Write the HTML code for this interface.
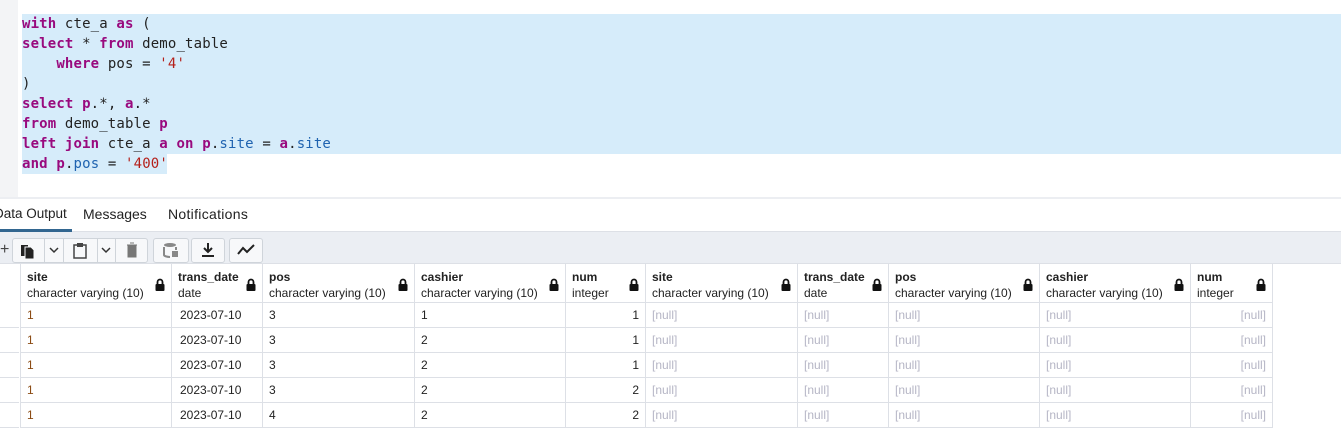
<!DOCTYPE html>
<html><head><style>
body{margin:0;width:1341px;height:440px;overflow:hidden;background:#fff;font-family:"Liberation Sans",Arial,sans-serif;position:relative}
.gut{position:absolute;left:0;top:0;width:18px;height:197px;background:#f3f4f6}
.hl{position:absolute;background:#d6ecfa}
.code{position:absolute;left:22px;top:14px;font:14px/20px "DejaVu Sans Mono",monospace;letter-spacing:0.15px;color:#222;white-space:pre}
.k{color:#990a7e;font-weight:bold}.s{color:#b5201a}.f{color:#1f63b0}
.sep{position:absolute;left:0;top:197px;width:1341px;height:2px;background:#eceef2}
.tabs{position:absolute;top:199px;left:0;width:1341px;height:32px;border-bottom:1px solid #dde0e6;font-size:14px;color:#222}
.tabs span{position:absolute;top:7px}
.ul{position:absolute;left:0;top:229px;width:72px;height:3px;background:#326690}
.tb{position:absolute;top:232px;left:0;width:1341px;height:31px;background:#ebeef3;border-bottom:1px solid #dde0e6}
.btn{position:absolute;top:6px;height:25px;background:#f7f8fa;border:1px solid #cfd4da;border-radius:3px;box-sizing:border-box}
table{position:absolute;left:20px;top:263px;border-collapse:collapse;font-size:12px;table-layout:fixed}
td,th{border:1px solid #dde0e6;padding:0 6px;height:24px;color:#222;font-weight:normal;text-align:left;position:relative;white-space:nowrap;overflow:hidden}
th{height:33px;vertical-align:top;padding-top:5px;line-height:16px}
th b{font-weight:bold;color:#222}
th svg{position:absolute;right:6px;top:14px}
td.o{color:#8a4a12}td.n{color:#b5b5c5}td.r{text-align:right}
.stub{position:absolute;left:0;width:19px;border-bottom:1px solid #dde0e6;background:#fff}
</style></head><body>
<div class="gut"></div>
<div class="hl" style="left:22px;top:14px;width:1319px;height:140px"></div>
<div class="hl" style="left:22px;top:154px;width:145px;height:20px"></div>
<div class="code"><span class="k">with</span> cte_a <span class="k">as</span> (
<span class="k">select</span> * <span class="k">from</span> demo_table
    <span class="k">where</span> pos = <span class="s">'4'</span>
)
<span class="k">select</span> <span class="k">p</span>.*, <span class="k">a</span>.*
<span class="k">from</span> demo_table <span class="k">p</span>
<span class="k">left join</span> cte_a <span class="k">a</span> <span class="k">on</span> <span class="k">p</span>.<span class="f">site</span> = <span class="k">a</span>.<span class="f">site</span>
<span class="k">and</span> <span class="k">p</span>.<span class="f">pos</span> = <span class="s">'400'</span></div>
<div class="sep"></div>
<div class="tabs"><span style="left:-6px;font-size:13.5px">Data Output</span><span style="left:83px">Messages</span><span style="left:168px;letter-spacing:0.3px">Notifications</span></div>
<div class="ul"></div>
<div class="tb">
<div style="position:absolute;left:0;top:9px;font-size:16px;color:#444">+</div>
<div class="btn" style="left:12px;width:136px"></div>
<div style="position:absolute;left:44px;top:6px;width:1px;height:25px;background:#cfd4da"></div>
<div style="position:absolute;left:63px;top:6px;width:1px;height:25px;background:#cfd4da"></div>
<div style="position:absolute;left:97px;top:6px;width:1px;height:25px;background:#cfd4da"></div>
<div style="position:absolute;left:115px;top:6px;width:1px;height:25px;background:#cfd4da"></div>
<svg style="position:absolute;left:20px;top:11px" width="16" height="16"><path d="M1 2h7v11H1z" fill="#222"/><path d="M5 4h6l3 3v9H5z" fill="#222" stroke="#f7f8fa" stroke-width="1"/></svg>
<svg style="position:absolute;left:49px;top:14px" width="10" height="8"><path d="M1 2l4 4 4-4" fill="none" stroke="#333" stroke-width="1.5"/></svg>
<svg style="position:absolute;left:72px;top:10px" width="16" height="17"><path d="M2 3h12v13H2z" fill="none" stroke="#444" stroke-width="1.5"/><path d="M5 1h6v4H5z" fill="#444"/></svg>
<svg style="position:absolute;left:101px;top:14px" width="10" height="8"><path d="M1 2l4 4 4-4" fill="none" stroke="#333" stroke-width="1.5"/></svg>
<svg style="position:absolute;left:126px;top:10px" width="12" height="16"><path d="M1 3h10M4 1h4M2 4h8v11H2z" fill="#777" stroke="#777"/></svg>
<div class="btn" style="left:153px;width:36px"></div>
<svg style="position:absolute;left:163px;top:10px" width="16" height="16"><ellipse cx="7" cy="3" rx="6" ry="2" fill="#888"/><path d="M1 5v8c0 1 3 2 6 2M13 5v3" stroke="#888" stroke-width="2" fill="none"/><rect x="9" y="9" width="6" height="6" fill="#888"/></svg>
<div class="btn" style="left:191px;width:34px"></div>
<svg style="position:absolute;left:201px;top:10px" width="14" height="16"><path d="M7 1v9M3 6l4 4 4-4M1 14h12" stroke="#222" stroke-width="2" fill="none"/></svg>
<div class="btn" style="left:229px;width:34px"></div>
<svg style="position:absolute;left:237px;top:12px" width="18" height="12"><path d="M1 10l5-6 4 4 7-7" stroke="#222" stroke-width="2" fill="none"/></svg>
</div>
<div class="stub" style="top:303px;height:24px"></div><div class="stub" style="top:328px;height:24px"></div><div class="stub" style="top:353px;height:24px"></div><div class="stub" style="top:378px;height:24px"></div><div class="stub" style="top:403px;height:24px"></div>
<table>
<colgroup><col style="width:151px"><col style="width:91px"><col style="width:152px"><col style="width:151px"><col style="width:80px"><col style="width:152px"><col style="width:91px"><col style="width:151px"><col style="width:151px"><col style="width:82px"></colgroup>
<tr>
<th><b>site</b><br>character varying (10)<svg width="10" height="13"><path d="M2.5 6V4a2.5 2.5 0 0 1 5 0v2" stroke="#111" stroke-width="1.8" fill="none"/><rect x="0.5" y="6" width="9" height="7" rx="1" fill="#111"/></svg></th>
<th><b>trans_date</b><br>date<svg width="10" height="13"><path d="M2.5 6V4a2.5 2.5 0 0 1 5 0v2" stroke="#111" stroke-width="1.8" fill="none"/><rect x="0.5" y="6" width="9" height="7" rx="1" fill="#111"/></svg></th>
<th><b>pos</b><br>character varying (10)<svg width="10" height="13"><path d="M2.5 6V4a2.5 2.5 0 0 1 5 0v2" stroke="#111" stroke-width="1.8" fill="none"/><rect x="0.5" y="6" width="9" height="7" rx="1" fill="#111"/></svg></th>
<th><b>cashier</b><br>character varying (10)<svg width="10" height="13"><path d="M2.5 6V4a2.5 2.5 0 0 1 5 0v2" stroke="#111" stroke-width="1.8" fill="none"/><rect x="0.5" y="6" width="9" height="7" rx="1" fill="#111"/></svg></th>
<th><b>num</b><br>integer<svg width="10" height="13"><path d="M2.5 6V4a2.5 2.5 0 0 1 5 0v2" stroke="#111" stroke-width="1.8" fill="none"/><rect x="0.5" y="6" width="9" height="7" rx="1" fill="#111"/></svg></th>
<th><b>site</b><br>character varying (10)<svg width="10" height="13"><path d="M2.5 6V4a2.5 2.5 0 0 1 5 0v2" stroke="#111" stroke-width="1.8" fill="none"/><rect x="0.5" y="6" width="9" height="7" rx="1" fill="#111"/></svg></th>
<th><b>trans_date</b><br>date<svg width="10" height="13"><path d="M2.5 6V4a2.5 2.5 0 0 1 5 0v2" stroke="#111" stroke-width="1.8" fill="none"/><rect x="0.5" y="6" width="9" height="7" rx="1" fill="#111"/></svg></th>
<th><b>pos</b><br>character varying (10)<svg width="10" height="13"><path d="M2.5 6V4a2.5 2.5 0 0 1 5 0v2" stroke="#111" stroke-width="1.8" fill="none"/><rect x="0.5" y="6" width="9" height="7" rx="1" fill="#111"/></svg></th>
<th><b>cashier</b><br>character varying (10)<svg width="10" height="13"><path d="M2.5 6V4a2.5 2.5 0 0 1 5 0v2" stroke="#111" stroke-width="1.8" fill="none"/><rect x="0.5" y="6" width="9" height="7" rx="1" fill="#111"/></svg></th>
<th><b>num</b><br>integer<svg width="10" height="13"><path d="M2.5 6V4a2.5 2.5 0 0 1 5 0v2" stroke="#111" stroke-width="1.8" fill="none"/><rect x="0.5" y="6" width="9" height="7" rx="1" fill="#111"/></svg></th>
</tr>
<tr><td class="o">1</td><td style="padding-left:8px">2023-07-10</td><td>3</td><td>1</td><td class="r">1</td><td class="n">[null]</td><td class="n">[null]</td><td class="n">[null]</td><td class="n">[null]</td><td class="n r">[null]</td></tr>
<tr><td class="o">1</td><td style="padding-left:8px">2023-07-10</td><td>3</td><td>2</td><td class="r">1</td><td class="n">[null]</td><td class="n">[null]</td><td class="n">[null]</td><td class="n">[null]</td><td class="n r">[null]</td></tr>
<tr><td class="o">1</td><td style="padding-left:8px">2023-07-10</td><td>3</td><td>2</td><td class="r">1</td><td class="n">[null]</td><td class="n">[null]</td><td class="n">[null]</td><td class="n">[null]</td><td class="n r">[null]</td></tr>
<tr><td class="o">1</td><td style="padding-left:8px">2023-07-10</td><td>3</td><td>2</td><td class="r">2</td><td class="n">[null]</td><td class="n">[null]</td><td class="n">[null]</td><td class="n">[null]</td><td class="n r">[null]</td></tr>
<tr><td class="o">1</td><td style="padding-left:8px">2023-07-10</td><td>4</td><td>2</td><td class="r">2</td><td class="n">[null]</td><td class="n">[null]</td><td class="n">[null]</td><td class="n">[null]</td><td class="n r">[null]</td></tr>
</table>
</body></html>
